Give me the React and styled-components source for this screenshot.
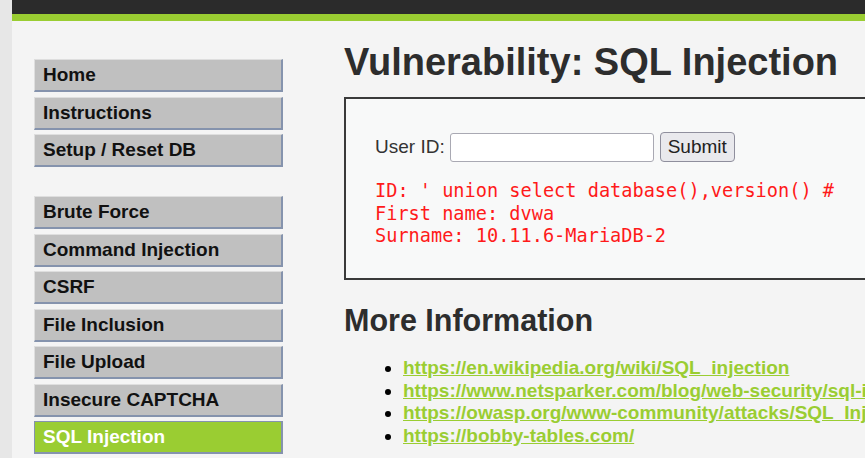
import React from "react";
import styled, { createGlobalStyle } from "styled-components";

const green = "#9acd32";
const dark = "#2b2b2b";

const GlobalStyle = createGlobalStyle`
  html, body {
    margin: 0;
    padding: 0;
    background: #e7e7e7;
    overflow: hidden;
    font-family: "Liberation Sans", Arial, sans-serif;
  }
`;

const Page = styled.div`
  margin-left: 12px;
  width: 1200px;
  min-height: 458px;
  background: #f4f4f4;
`;

const Header = styled.div`
  height: 14px;
  background: ${dark};
  border-bottom: 7px solid ${green};
`;

const Body = styled.div`
  display: flex;
  align-items: flex-start;
  padding-top: 20px;
`;

const Menu = styled.div`
  width: 249px;
  margin: 18px 62px 0 22px;
  display: flex;
  flex-direction: column;
`;

const MenuGroup = styled.ul`
  list-style: none;
  margin: 0 0 29px 0;
  padding: 0;
  display: flex;
  flex-direction: column;
  gap: 4.5px;
`;

const MenuItem = styled.li`
  height: 33px;
  box-sizing: border-box;
  display: flex;
  align-items: center;
  padding-left: 8px;
  font-size: 19px;
  font-weight: bold;
  background: ${(p) => (p.$active ? green : "#c0c0c0")};
  color: ${(p) => (p.$active ? "#ffffff" : "#111111")};
  border-top: 1px solid ${(p) => (p.$active ? "#8593ad" : "#dedede")};
  border-left: 1px solid ${(p) => (p.$active ? "#8593ad" : "#dedede")};
  border-right: 2px solid #8593ad;
  border-bottom: 2px solid #8593ad;
`;

const Main = styled.div`
  flex: 1;
  display: flex;
  flex-direction: column;
`;

const Title = styled.h1`
  margin: 0 0 14px -1px;
  font-size: 38px;
  line-height: 42px;
  font-weight: bold;
  color: #2d2d2d;
`;

const Box = styled.div`
  width: 700px;
  height: 183px;
  margin-left: -1px;
  box-sizing: border-box;
  background: #f8f9f9;
  border: 2px solid #3a3a3a;
  padding: 33px 0 0 29px;
`;

const Form = styled.form`
  display: flex;
  align-items: center;
  font-size: 19px;
  color: #333333;
`;

const Input = styled.input`
  width: 204px;
  height: 29px;
  box-sizing: border-box;
  margin: 0 6px 0 5px;
  border: 1px solid #a9a9b3;
  border-radius: 3px;
  background: #ffffff;
`;

const Button = styled.button`
  height: 30px;
  box-sizing: border-box;
  padding: 0 7px;
  font-family: "Liberation Sans", Arial, sans-serif;
  font-size: 19px;
  color: #222222;
  background: #e9e9ed;
  border: 1px solid #8f8f9d;
  border-radius: 4px;
`;

const Result = styled.pre`
  margin: 18px 0 0 0;
  font-family: "DejaVu Sans Mono", monospace;
  font-size: 18.6px;
  line-height: 22.5px;
  color: #ff1a1a;
`;

const SubTitle = styled.h2`
  margin: 23px 0 0 -1px;
  font-size: 30.5px;
  line-height: 34px;
  font-weight: bold;
  color: #2d2d2d;
`;

const Links = styled.ul`
  margin: 20px 0 0 0;
  padding-left: 58px;
  font-size: 19px;
  line-height: 22.7px;
  white-space: nowrap;
`;

const Link = styled.a`
  color: ${green};
  font-weight: bold;
  text-decoration: underline;
`;

const groups = [
  ["Home", "Instructions", "Setup / Reset DB"],
  [
    "Brute Force",
    "Command Injection",
    "CSRF",
    "File Inclusion",
    "File Upload",
    "Insecure CAPTCHA",
    "SQL Injection",
    "SQL Injection (Blind)",
  ],
];

const links = [
  "https://en.wikipedia.org/wiki/SQL_injection",
  "https://www.netsparker.com/blog/web-security/sql-injection-cheat-sheet/",
  "https://owasp.org/www-community/attacks/SQL_Injection",
  "https://bobby-tables.com/",
];

export default function App() {
  return (
    <>
      <GlobalStyle />
      <Page>
        <Header />
        <Body>
          <Menu>
            {groups.map((g, i) => (
              <MenuGroup key={i}>
                {g.map((item) => (
                  <MenuItem key={item} $active={item === "SQL Injection"}>
                    {item}
                  </MenuItem>
                ))}
              </MenuGroup>
            ))}
          </Menu>
          <Main>
            <Title>Vulnerability: SQL Injection</Title>
            <Box>
              <Form onSubmit={(e) => e.preventDefault()}>
                User ID:
                <Input type="text" />
                <Button type="submit">Submit</Button>
              </Form>
              <Result>
                {"ID: ' union select database(),version() #\nFirst name: dvwa\nSurname: 10.11.6-MariaDB-2"}
              </Result>
            </Box>
            <SubTitle>More Information</SubTitle>
            <Links>
              {links.map((l) => (
                <li key={l}>
                  <Link href="#">{l}</Link>
                </li>
              ))}
            </Links>
          </Main>
        </Body>
      </Page>
    </>
  );
}
